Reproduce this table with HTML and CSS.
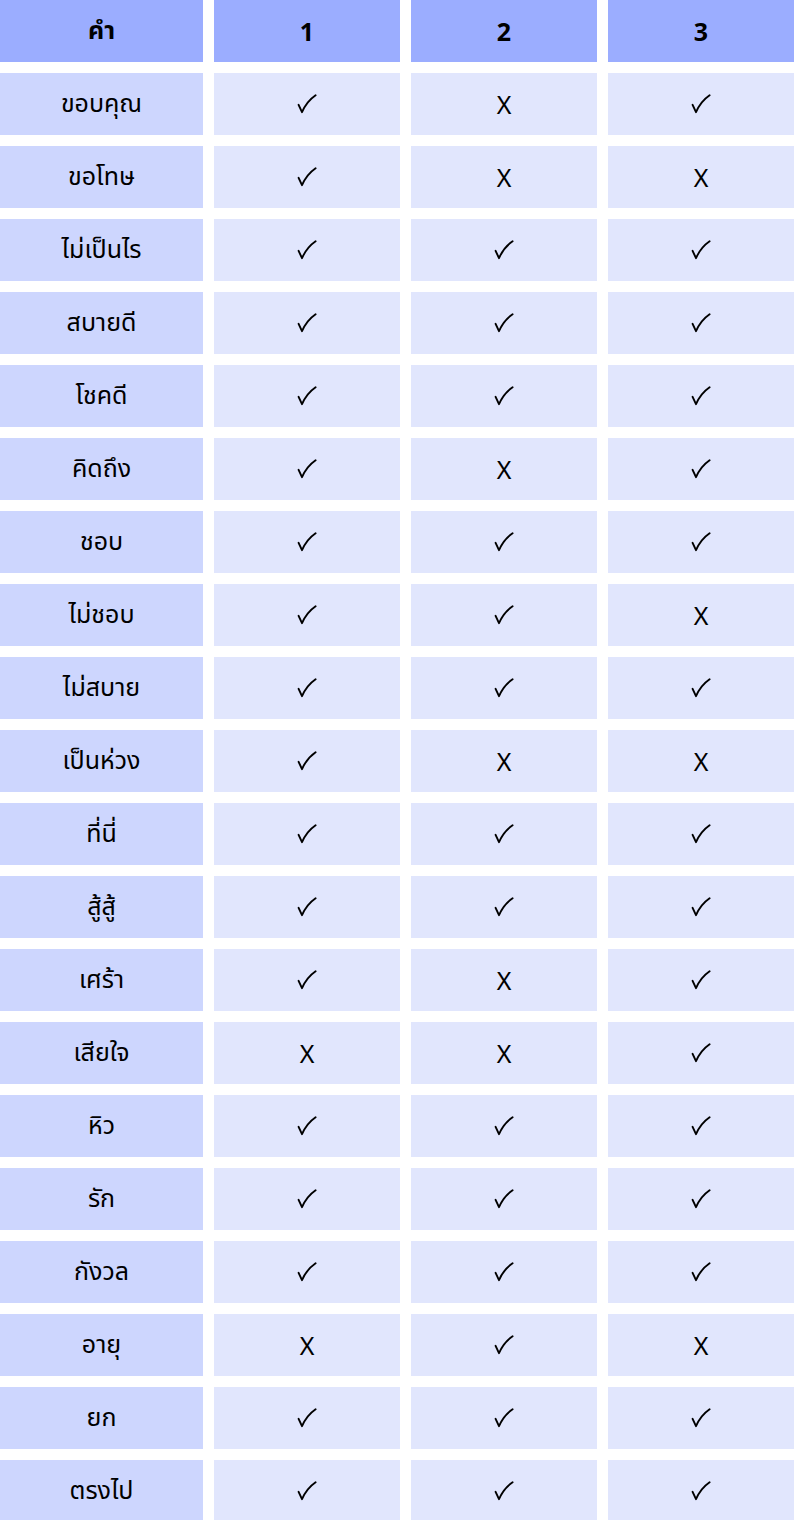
FILE: index.html
```html
<!DOCTYPE html>
<html lang="th">
<head>
<meta charset="utf-8">
<link rel="stylesheet" href="styles.css">
</head>
<body>
<div class="table">
  <div class="cell head">คำ</div><div class="cell head">1</div><div class="cell head">2</div><div class="cell head">3</div>
  <div class="cell word">ขอบคุณ</div><div class="cell"><svg class="ok" viewBox="0 0 20 20"><path d="M1.6 10.8 L5 18.2 Q9.5 7.5 18.6 1.2"/></svg></div><div class="cell">X</div><div class="cell"><svg class="ok" viewBox="0 0 20 20"><path d="M1.6 10.8 L5 18.2 Q9.5 7.5 18.6 1.2"/></svg></div>
  <div class="cell word">ขอโทษ</div><div class="cell"><svg class="ok" viewBox="0 0 20 20"><path d="M1.6 10.8 L5 18.2 Q9.5 7.5 18.6 1.2"/></svg></div><div class="cell">X</div><div class="cell">X</div>
  <div class="cell word">ไม่เป็นไร</div><div class="cell"><svg class="ok" viewBox="0 0 20 20"><path d="M1.6 10.8 L5 18.2 Q9.5 7.5 18.6 1.2"/></svg></div><div class="cell"><svg class="ok" viewBox="0 0 20 20"><path d="M1.6 10.8 L5 18.2 Q9.5 7.5 18.6 1.2"/></svg></div><div class="cell"><svg class="ok" viewBox="0 0 20 20"><path d="M1.6 10.8 L5 18.2 Q9.5 7.5 18.6 1.2"/></svg></div>
  <div class="cell word">สบายดี</div><div class="cell"><svg class="ok" viewBox="0 0 20 20"><path d="M1.6 10.8 L5 18.2 Q9.5 7.5 18.6 1.2"/></svg></div><div class="cell"><svg class="ok" viewBox="0 0 20 20"><path d="M1.6 10.8 L5 18.2 Q9.5 7.5 18.6 1.2"/></svg></div><div class="cell"><svg class="ok" viewBox="0 0 20 20"><path d="M1.6 10.8 L5 18.2 Q9.5 7.5 18.6 1.2"/></svg></div>
  <div class="cell word">โชคดี</div><div class="cell"><svg class="ok" viewBox="0 0 20 20"><path d="M1.6 10.8 L5 18.2 Q9.5 7.5 18.6 1.2"/></svg></div><div class="cell"><svg class="ok" viewBox="0 0 20 20"><path d="M1.6 10.8 L5 18.2 Q9.5 7.5 18.6 1.2"/></svg></div><div class="cell"><svg class="ok" viewBox="0 0 20 20"><path d="M1.6 10.8 L5 18.2 Q9.5 7.5 18.6 1.2"/></svg></div>
  <div class="cell word">คิดถึง</div><div class="cell"><svg class="ok" viewBox="0 0 20 20"><path d="M1.6 10.8 L5 18.2 Q9.5 7.5 18.6 1.2"/></svg></div><div class="cell">X</div><div class="cell"><svg class="ok" viewBox="0 0 20 20"><path d="M1.6 10.8 L5 18.2 Q9.5 7.5 18.6 1.2"/></svg></div>
  <div class="cell word">ชอบ</div><div class="cell"><svg class="ok" viewBox="0 0 20 20"><path d="M1.6 10.8 L5 18.2 Q9.5 7.5 18.6 1.2"/></svg></div><div class="cell"><svg class="ok" viewBox="0 0 20 20"><path d="M1.6 10.8 L5 18.2 Q9.5 7.5 18.6 1.2"/></svg></div><div class="cell"><svg class="ok" viewBox="0 0 20 20"><path d="M1.6 10.8 L5 18.2 Q9.5 7.5 18.6 1.2"/></svg></div>
  <div class="cell word">ไม่ชอบ</div><div class="cell"><svg class="ok" viewBox="0 0 20 20"><path d="M1.6 10.8 L5 18.2 Q9.5 7.5 18.6 1.2"/></svg></div><div class="cell"><svg class="ok" viewBox="0 0 20 20"><path d="M1.6 10.8 L5 18.2 Q9.5 7.5 18.6 1.2"/></svg></div><div class="cell">X</div>
  <div class="cell word">ไม่สบาย</div><div class="cell"><svg class="ok" viewBox="0 0 20 20"><path d="M1.6 10.8 L5 18.2 Q9.5 7.5 18.6 1.2"/></svg></div><div class="cell"><svg class="ok" viewBox="0 0 20 20"><path d="M1.6 10.8 L5 18.2 Q9.5 7.5 18.6 1.2"/></svg></div><div class="cell"><svg class="ok" viewBox="0 0 20 20"><path d="M1.6 10.8 L5 18.2 Q9.5 7.5 18.6 1.2"/></svg></div>
  <div class="cell word">เป็นห่วง</div><div class="cell"><svg class="ok" viewBox="0 0 20 20"><path d="M1.6 10.8 L5 18.2 Q9.5 7.5 18.6 1.2"/></svg></div><div class="cell">X</div><div class="cell">X</div>
  <div class="cell word">ที่นี่</div><div class="cell"><svg class="ok" viewBox="0 0 20 20"><path d="M1.6 10.8 L5 18.2 Q9.5 7.5 18.6 1.2"/></svg></div><div class="cell"><svg class="ok" viewBox="0 0 20 20"><path d="M1.6 10.8 L5 18.2 Q9.5 7.5 18.6 1.2"/></svg></div><div class="cell"><svg class="ok" viewBox="0 0 20 20"><path d="M1.6 10.8 L5 18.2 Q9.5 7.5 18.6 1.2"/></svg></div>
  <div class="cell word">สู้สู้</div><div class="cell"><svg class="ok" viewBox="0 0 20 20"><path d="M1.6 10.8 L5 18.2 Q9.5 7.5 18.6 1.2"/></svg></div><div class="cell"><svg class="ok" viewBox="0 0 20 20"><path d="M1.6 10.8 L5 18.2 Q9.5 7.5 18.6 1.2"/></svg></div><div class="cell"><svg class="ok" viewBox="0 0 20 20"><path d="M1.6 10.8 L5 18.2 Q9.5 7.5 18.6 1.2"/></svg></div>
  <div class="cell word">เศร้า</div><div class="cell"><svg class="ok" viewBox="0 0 20 20"><path d="M1.6 10.8 L5 18.2 Q9.5 7.5 18.6 1.2"/></svg></div><div class="cell">X</div><div class="cell"><svg class="ok" viewBox="0 0 20 20"><path d="M1.6 10.8 L5 18.2 Q9.5 7.5 18.6 1.2"/></svg></div>
  <div class="cell word">เสียใจ</div><div class="cell">X</div><div class="cell">X</div><div class="cell"><svg class="ok" viewBox="0 0 20 20"><path d="M1.6 10.8 L5 18.2 Q9.5 7.5 18.6 1.2"/></svg></div>
  <div class="cell word">หิว</div><div class="cell"><svg class="ok" viewBox="0 0 20 20"><path d="M1.6 10.8 L5 18.2 Q9.5 7.5 18.6 1.2"/></svg></div><div class="cell"><svg class="ok" viewBox="0 0 20 20"><path d="M1.6 10.8 L5 18.2 Q9.5 7.5 18.6 1.2"/></svg></div><div class="cell"><svg class="ok" viewBox="0 0 20 20"><path d="M1.6 10.8 L5 18.2 Q9.5 7.5 18.6 1.2"/></svg></div>
  <div class="cell word">รัก</div><div class="cell"><svg class="ok" viewBox="0 0 20 20"><path d="M1.6 10.8 L5 18.2 Q9.5 7.5 18.6 1.2"/></svg></div><div class="cell"><svg class="ok" viewBox="0 0 20 20"><path d="M1.6 10.8 L5 18.2 Q9.5 7.5 18.6 1.2"/></svg></div><div class="cell"><svg class="ok" viewBox="0 0 20 20"><path d="M1.6 10.8 L5 18.2 Q9.5 7.5 18.6 1.2"/></svg></div>
  <div class="cell word">กังวล</div><div class="cell"><svg class="ok" viewBox="0 0 20 20"><path d="M1.6 10.8 L5 18.2 Q9.5 7.5 18.6 1.2"/></svg></div><div class="cell"><svg class="ok" viewBox="0 0 20 20"><path d="M1.6 10.8 L5 18.2 Q9.5 7.5 18.6 1.2"/></svg></div><div class="cell"><svg class="ok" viewBox="0 0 20 20"><path d="M1.6 10.8 L5 18.2 Q9.5 7.5 18.6 1.2"/></svg></div>
  <div class="cell word">อายุ</div><div class="cell">X</div><div class="cell"><svg class="ok" viewBox="0 0 20 20"><path d="M1.6 10.8 L5 18.2 Q9.5 7.5 18.6 1.2"/></svg></div><div class="cell">X</div>
  <div class="cell word">ยก</div><div class="cell"><svg class="ok" viewBox="0 0 20 20"><path d="M1.6 10.8 L5 18.2 Q9.5 7.5 18.6 1.2"/></svg></div><div class="cell"><svg class="ok" viewBox="0 0 20 20"><path d="M1.6 10.8 L5 18.2 Q9.5 7.5 18.6 1.2"/></svg></div><div class="cell"><svg class="ok" viewBox="0 0 20 20"><path d="M1.6 10.8 L5 18.2 Q9.5 7.5 18.6 1.2"/></svg></div>
  <div class="cell word">ตรงไป</div><div class="cell"><svg class="ok" viewBox="0 0 20 20"><path d="M1.6 10.8 L5 18.2 Q9.5 7.5 18.6 1.2"/></svg></div><div class="cell"><svg class="ok" viewBox="0 0 20 20"><path d="M1.6 10.8 L5 18.2 Q9.5 7.5 18.6 1.2"/></svg></div><div class="cell"><svg class="ok" viewBox="0 0 20 20"><path d="M1.6 10.8 L5 18.2 Q9.5 7.5 18.6 1.2"/></svg></div>
</div>
</body>
</html>
```
FILE: styles.css
```css
html, body {
  margin: 0;
  padding: 0;
  background: #ffffff;
}
body {
  font-family: "Noto Sans", "Noto Sans Thai", "DejaVu Sans", sans-serif;
  font-size: 25px;
  color: #000;
}
.table {
  display: grid;
  grid-template-columns: 203px 186px 186px 186px;
  grid-auto-rows: 62px;
  column-gap: 11px;
  row-gap: 11px;
}
.cell {
  display: flex;
  align-items: center;
  justify-content: center;
  background: #e1e6fd;
}
.cell.word {
  background: #cdd6fe;
}
.cell.head {
  background: #9badff;
  font-weight: bold;
}
.ok {
  width: 20px;
  height: 20px;
  margin-top: -1px;
  fill: none;
  stroke: #000;
  stroke-width: 1.9;
  stroke-linecap: round;
  stroke-linejoin: round;
}
```
